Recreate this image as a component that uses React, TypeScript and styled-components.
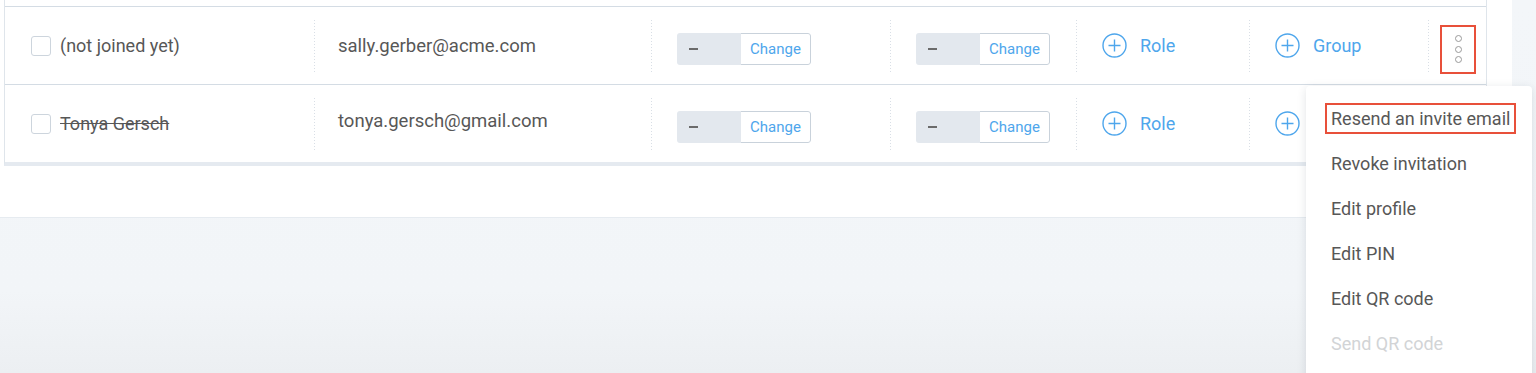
import React from 'react'
import styled, { createGlobalStyle } from 'styled-components'

const GlobalStyle = createGlobalStyle`
  html, body {
    margin: 0;
    padding: 0;
  }
  body {
    font-family: Roboto, 'Liberation Sans', sans-serif;
    color: #555;
    background: #f2f5f8;
  }
`

const BLUE = '#4ea6ec'
const MARK = '#e8503a'

const Page = styled.div`
  position: relative;
  height: 373px;
  overflow: hidden;
  background: linear-gradient(180deg, #f3f6f9 0%, #f2f5f8 78%, #eceff2 100%);
`

const Panel = styled.div`
  width: 1512px;
  height: 218px;
  box-sizing: border-box;
  padding: 0 25px 0 4px;
  background: #fff;
  border-bottom: 1px solid #e6ebf0;
`

const Table = styled.div`
  border-left: 1px solid #dfe5eb;
  border-right: 1px solid #dfe5eb;
  border-bottom: 4px solid #e5eaf0;
`

const TopStub = styled.div`
  height: 6px;
  border-bottom: 1px solid #d4dce4;
`

const Row = styled.div`
  display: grid;
  grid-template-columns: 309px 337px 239px 186px 173px 179px 58px;
  align-items: center;
  height: 77px;
  border-bottom: 1px solid #d4dce4;

  &:last-child {
    border-bottom: none;
  }
`

const Cell = styled.div<{ $first?: boolean; $pad?: number }>`
  display: flex;
  align-items: center;
  height: 52px;
  padding-left: ${p => p.$pad ?? 26}px;
  background: ${p =>
    p.$first ? 'none' : 'linear-gradient(to bottom, #d9dfe6 50%, transparent 50%) left top / 1px 3px repeat-y'};
  box-sizing: border-box;
`

const Checkbox = styled.span`
  width: 20px;
  height: 20px;
  box-sizing: border-box;
  border: 1px solid #cdd5dd;
  border-radius: 3px;
  background: #fff;
  margin-right: 9px;
  flex-shrink: 0;
`

const Name = styled.span<{ $struck?: boolean }>`
  font-size: 18px;
  color: #575757;
  text-decoration: ${p => (p.$struck ? 'line-through' : 'none')};
`

const Email = styled.span<{ $lift?: number }>`
  font-size: 18.5px;
  color: #575757;
  margin-top: ${p => -(p.$lift ?? 0)}px;
`

const ChangeBox = styled.div`
  display: flex;
  height: 32px;
  margin-top: 7px;
  border-radius: 3px;
  overflow: hidden;
`

const Value = styled.div`
  width: 64px;
  background: #e3e8ee;
  display: flex;
  align-items: center;
  padding-left: 12px;
  box-sizing: border-box;
`

const Dash = styled.span`
  width: 9px;
  height: 2px;
  background: #6b6b6b;
`

const ChangeButton = styled.button`
  width: 70px;
  height: 32px;
  box-sizing: border-box;
  border: 1px solid #c9d2db;
  border-left: none;
  border-radius: 0 3px 3px 0;
  background: #fff;
  color: ${BLUE};
  font-family: Roboto, 'Liberation Sans', sans-serif;
  font-size: 15px;
  padding: 0;
  cursor: pointer;
`

const AddLink = styled.a`
  display: flex;
  align-items: center;
  gap: 13px;
  color: ${BLUE};
  font-size: 18px;
  text-decoration: none;
  cursor: pointer;
`

const Kebab = styled.button<{ $marked?: boolean }>`
  width: 36px;
  height: 49px;
  margin-top: 7px;
  display: flex;
  flex-direction: column;
  align-items: center;
  justify-content: center;
  gap: 3.5px;
  padding: 0;
  background: transparent;
  border: 2px solid ${p => (p.$marked ? MARK : 'transparent')};
  box-sizing: border-box;
  cursor: pointer;
`

const Dot = styled.span`
  width: 7px;
  height: 7px;
  box-sizing: border-box;
  border: 1.5px solid #9a9a9a;
  border-radius: 50%;
`

const Menu = styled.div`
  position: absolute;
  left: 1306px;
  top: 86px;
  width: 226px;
  height: 310px;
  padding-top: 10px;
  box-sizing: border-box;
  background: #fff;
  border-radius: 4px;
  box-shadow: 0 2px 10px rgba(30, 45, 60, 0.13);
`

const MenuItem = styled.div<{ $disabled?: boolean }>`
  height: 45px;
  display: flex;
  align-items: center;
  padding-left: 25px;
  font-size: 18px;
  color: ${p => (p.$disabled ? '#d2d4d6' : '#575757')};
  cursor: ${p => (p.$disabled ? 'default' : 'pointer')};
`

const Marked = styled.span`
  display: inline-block;
  margin-left: -6px;
  padding: 0 4px;
  height: 31px;
  line-height: 27px;
  box-sizing: border-box;
  border: 2px solid ${MARK};
  white-space: nowrap;
`

const PlusCircle = () => (
  <svg width="25" height="25" viewBox="0 0 25 25" fill="none">
    <circle cx="12.5" cy="12.5" r="11.5" stroke={BLUE} strokeWidth="1.4" />
    <path d="M12.5 6.5v12M6.5 12.5h12" stroke={BLUE} strokeWidth="1.4" />
  </svg>
)

interface Member {
  name: string
  email: string
  struck?: boolean
  lift?: number
  addGroupLabel: boolean
  marked?: boolean
}

const members: Member[] = [
  { name: '(not joined yet)', email: 'sally.gerber@acme.com', addGroupLabel: true, marked: true },
  { name: 'Tonya Gersch', email: 'tonya.gersch@gmail.com', struck: true, lift: 5, addGroupLabel: false },
]

const menuItems = [
  { label: 'Resend an invite email', marked: true },
  { label: 'Revoke invitation' },
  { label: 'Edit profile' },
  { label: 'Edit PIN' },
  { label: 'Edit QR code' },
  { label: 'Send QR code', disabled: true },
]

const ChangeControl = () => (
  <ChangeBox>
    <Value>
      <Dash />
    </Value>
    <ChangeButton>Change</ChangeButton>
  </ChangeBox>
)

export default function App() {
  return (
    <>
      <GlobalStyle />
      <Page>
        <Panel>
          <Table>
            <TopStub />
            {members.map(m => (
              <Row key={m.email}>
                <Cell $first>
                  <Checkbox />
                  <Name $struck={m.struck}>{m.name}</Name>
                </Cell>
                <Cell $pad={24}>
                  <Email $lift={m.lift}>{m.email}</Email>
                </Cell>
                <Cell>
                  <ChangeControl />
                </Cell>
                <Cell>
                  <ChangeControl />
                </Cell>
                <Cell>
                  <AddLink>
                    <PlusCircle />
                    Role
                  </AddLink>
                </Cell>
                <Cell>
                  <AddLink>
                    <PlusCircle />
                    {m.addGroupLabel && 'Group'}
                  </AddLink>
                </Cell>
                <Cell $pad={12}>
                  {m.marked && (
                    <Kebab $marked>
                      <Dot />
                      <Dot />
                      <Dot />
                    </Kebab>
                  )}
                </Cell>
              </Row>
            ))}
          </Table>
        </Panel>
        <Menu>
          {menuItems.map(item => (
            <MenuItem key={item.label} $disabled={item.disabled}>
              {item.marked ? <Marked>{item.label}</Marked> : item.label}
            </MenuItem>
          ))}
        </Menu>
      </Page>
    </>
  )
}
